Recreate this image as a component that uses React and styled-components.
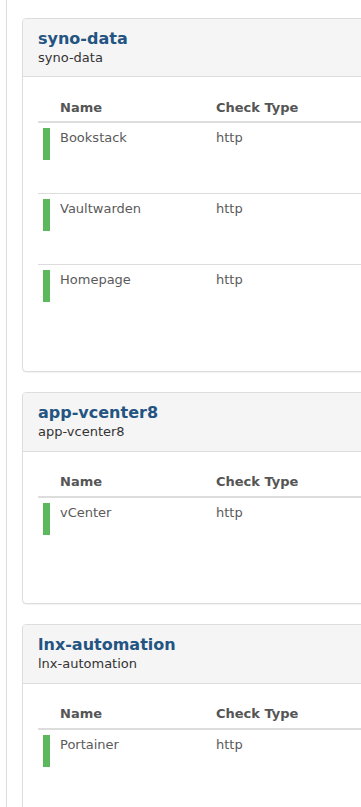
import React from 'react';
import styled, { createGlobalStyle } from 'styled-components';

const GlobalStyle = createGlobalStyle`
  html, body {
    margin: 0;
    padding: 0;
    background: #fff;
    overflow: hidden;
  }
  body {
    font-family: "DejaVu Sans", Verdana, sans-serif;
    font-size: 13px;
    color: #555;
  }
`;

const Page = styled.div`
  margin-left: 6px;
  border-left: 1px solid #ddd;
  padding: 17.6px 0 0 15px;
  min-height: 807px;
  box-sizing: border-box;
`;

const Panel = styled.div`
  width: 640px;
  border: 1px solid #ddd;
  border-radius: 4px;
  background: #fff;
  box-shadow: 0 1px 1px rgba(0, 0, 0, 0.05);
  margin-bottom: 20px;
`;

const PanelHeader = styled.div`
  background: #f5f5f5;
  border-bottom: 1px solid #ddd;
  border-radius: 3px 3px 0 0;
  padding: 10px 15px 9px;
`;

const Title = styled.div`
  font-size: 16px;
  font-weight: bold;
  line-height: 20px;
  color: #235482;
`;

const Subtitle = styled.div`
  font-size: 13px;
  line-height: 18.6px;
  color: #333;
`;

const PanelBody = styled.div`
  padding: 15px;
`;

const Table = styled.div`
  margin-bottom: 20.8px;
`;

const HeadRow = styled.div`
  display: grid;
  grid-template-columns: 14px 156px 1fr;
  border-bottom: 2px solid #ddd;
`;

const Th = styled.div`
  padding: 6.5px 8px 4px;
  font-weight: bold;
  line-height: 18.5px;
  color: #555;
`;

const Row = styled.div`
  display: grid;
  grid-template-columns: 14px 156px 1fr;
  height: 70px;
  & + & {
    border-top: 1px solid #ddd;
  }
`;

const StatusCell = styled.div`
  padding: 5px 0 0 5px;
`;

const StatusBar = styled.div`
  width: 7px;
  height: 32px;
  background: ${p => (p.$up ? '#5cb85c' : '#d9534f')};
`;

const Td = styled.div`
  padding: 6px 8px 0;
  line-height: 18.5px;
  color: #5a5a5a;
`;

const groups = [
  {
    name: 'syno-data',
    checks: [
      { name: 'Bookstack', type: 'http' },
      { name: 'Vaultwarden', type: 'http' },
      { name: 'Homepage', type: 'http' },
    ],
  },
  {
    name: 'app-vcenter8',
    checks: [{ name: 'vCenter', type: 'http' }],
  },
  {
    name: 'lnx-automation',
    checks: [{ name: 'Portainer', type: 'http' }],
  },
];

const App = () => {
  return (
    <Page>
      <GlobalStyle />
      {groups.map(g => (
        <Panel key={g.name}>
          <PanelHeader>
            <Title>{g.name}</Title>
            <Subtitle>{g.name}</Subtitle>
          </PanelHeader>
          <PanelBody>
            <Table>
              <HeadRow>
                <Th />
                <Th>Name</Th>
                <Th>Check Type</Th>
              </HeadRow>
              {g.checks.map(c => (
                <Row key={c.name}>
                  <StatusCell>
                    <StatusBar $up />
                  </StatusCell>
                  <Td>{c.name}</Td>
                  <Td>{c.type}</Td>
                </Row>
              ))}
            </Table>
          </PanelBody>
        </Panel>
      ))}
    </Page>
  );
};

export default App;
